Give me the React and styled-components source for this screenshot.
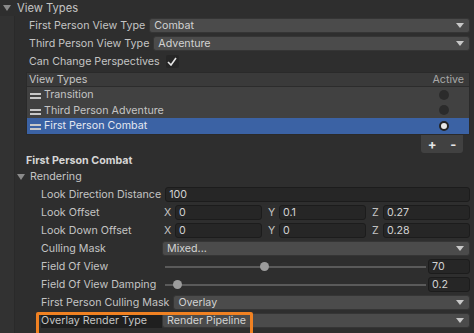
import React from "react";
import styled, { createGlobalStyle } from "styled-components";

const GlobalStyle = createGlobalStyle`
    html, body {
        margin: 0;
        padding: 0;
        background: #2e2e2e;
    }
    * {
        box-sizing: border-box;
    }
`;

const viewTypes = [
    { label: "Transition", active: false },
    { label: "Third Person Adventure", active: false },
    { label: "First Person Combat", active: true, selected: true },
];

const Arrow = () => (
    <svg width="8" height="5" viewBox="0 0 8 5">
        <path d="M0 0 L8 0 L4 5 Z" fill="#c8c8c8" />
    </svg>
);

const Fold = () => (
    <svg width="8" height="6" viewBox="0 0 8 6">
        <path d="M0 0 L8 0 L4 6 Z" fill="#8a8a8a" />
    </svg>
);

const Dropdown = ({ value }) => (
    <Select>
        <span>{value}</span>
        <Arrow />
    </Select>
);

const SliderRow = ({ label, pos, value }) => (
    <Row $indent={26}>
        <Label $min={121}>{label}</Label>
        <Track>
            <Line />
            <Thumb style={{ left: pos }} />
        </Track>
        <NumField>{value}</NumField>
    </Row>
);

const Vector = ({ label, x, y, z }) => (
    <Row $indent={26}>
        <Label $min={121}>{label}</Label>
        <Axes>
            {[["X", x], ["Y", y], ["Z", z]].map(([a, v]) => (
                <Axis key={a}>
                    <AxisName>{a}</AxisName>
                    <Field>{v}</Field>
                </Axis>
            ))}
        </Axes>
    </Row>
);

const App = () => {
    return (
        <Page>
            <GlobalStyle />
            <Foldout>
                <Fold />
                <span>View Types</span>
            </Foldout>
            <Body>
                <Rail />
                <Content>
                    <Row $indent={14}>
                        <Label>First Person View Type</Label>
                        <Dropdown value="Combat" />
                    </Row>
                    <Row $indent={14}>
                        <Label>Third Person View Type</Label>
                        <Dropdown value="Adventure" />
                    </Row>
                    <Row $indent={14}>
                        <Label>Can Change Perspectives</Label>
                        <Check>
                            <svg width="10" height="9" viewBox="0 0 10 9">
                                <path d="M1 5 L4 8 L9 1" stroke="#e6e6e6" strokeWidth="1.6" fill="none" />
                            </svg>
                        </Check>
                    </Row>

                    <List>
                        <ListHeader>
                            <span>View Types</span>
                            <HeaderActive>Active</HeaderActive>
                        </ListHeader>
                        {viewTypes.map((item) => (
                            <ListItem key={item.label} $selected={item.selected}>
                                <Handle />
                                <span>{item.label}</span>
                                <Radio $on={item.active} />
                            </ListItem>
                        ))}
                    </List>
                    <FooterWrap>
                        <Footer>
                            <span>+</span>
                            <span>-</span>
                        </Footer>
                    </FooterWrap>

                    <Title>First Person Combat</Title>
                    <SubFoldout>
                        <Fold />
                        <span>Rendering</span>
                    </SubFoldout>

                    <Row $indent={26}>
                        <Label $min={121}>Look Direction Distance</Label>
                        <Field>100</Field>
                    </Row>
                    <Vector label="Look Offset" x="0" y="0.1" z="0.27" />
                    <Vector label="Look Down Offset" x="0" y="0" z="0.28" />
                    <Row $indent={26}>
                        <Label $min={121}>Culling Mask</Label>
                        <Dropdown value="Mixed..." />
                    </Row>
                    <SliderRow label="Field Of View" pos={95} value="70" />
                    <SliderRow label="Field Of View Damping" pos={8} value="0.2" />
                    <Row $indent={26}>
                        <Label $min={121}>First Person Culling Mask</Label>
                        <Dropdown value="Overlay" />
                    </Row>
                    <Row $indent={26}>
                        <Label $min={121} $dark>Overlay Render Type</Label>
                        <Dropdown value="Render Pipeline" />
                        <Highlight />
                    </Row>
                </Content>
            </Body>
        </Page>
    );
};

export default App;

const Page = styled.div`
    width: 474px;
    height: 333px;
    overflow: hidden;
    background: #2e2e2e;
    color: #c4c4c4;
    font-family: Inter, "Noto Sans", sans-serif;
    font-size: 10.7px;
    display: flex;
    flex-direction: column;
`;

const Foldout = styled.div`
    height: 16px;
    display: flex;
    align-items: center;
    gap: 6px;
    padding-left: 3px;
    flex: none;
    font-size: 11.2px;
`;

const Body = styled.div`
    display: flex;
    flex: 1;
`;

const Rail = styled.div`
    width: 15px;
    flex: none;
    background: #323232;
    border-right: 1px solid #2a2a2a;
`;

const Content = styled.div`
    flex: 1;
    display: flex;
    flex-direction: column;
    padding-right: 4px;
`;

const Row = styled.div`
    position: relative;
    height: 18px;
    flex: none;
    display: flex;
    align-items: center;
    padding-left: ${(p) => p.$indent}px;
`;

const Label = styled.div`
    flex: none;
    min-width: ${(p) => p.$min || 0}px;
    padding-right: 4px;
    height: 15px;
    line-height: 15px;
    white-space: nowrap;
    background: ${(p) => (p.$dark ? "#1f1f1f" : "transparent")};
`;

const Select = styled.div`
    flex: 1;
    height: 15px;
    display: flex;
    align-items: center;
    justify-content: space-between;
    padding: 0 5px 0 4px;
    background: #4b4b4b;
    border: 1px solid #353535;
    border-radius: 3px;
    color: #d2d2d2;
`;

const Check = styled.div`
    width: 13px;
    height: 13px;
    margin-left: 2px;
    border-radius: 2px;
    background: #262626;
    display: flex;
    align-items: center;
    justify-content: center;
`;

const List = styled.div`
    margin: 2px 0 0 11px;
    display: flex;
    flex-direction: column;
    background: #414141;
    border: 1px solid #2a2a2a;
`;

const ListHeader = styled.div`
    height: 14px;
    display: flex;
    align-items: center;
    justify-content: space-between;
    padding: 0 5px 0 2px;
    background: #3a3a3a;
    border-bottom: 1px solid #2c2c2c;
`;

const HeaderActive = styled.span`
    color: #a8a8a8;
`;

const ListItem = styled.div`
    height: 15.5px;
    display: flex;
    align-items: center;
    gap: 3px;
    padding: 0 20px 0 3px;
    background: ${(p) => (p.$selected ? "#3b62a4" : "transparent")};
    color: ${(p) => (p.$selected ? "#e4e8f0" : "#c4c4c4")};

    & > span {
        flex: 1;
    }
`;

const Handle = styled.div`
    width: 11px;
    height: 6px;
    border-top: 2px solid #c8c8c8;
    border-bottom: 2px solid #c8c8c8;
    margin-top: 3px;
`;

const Radio = styled.div`
    width: 10px;
    height: 10px;
    border-radius: 50%;
    background: ${(p) => (p.$on ? "#e8e8e8" : "#2b2b2b")};
    border: ${(p) => (p.$on ? "2px solid #222" : "none")};
`;

const FooterWrap = styled.div`
    display: flex;
    justify-content: flex-end;
    padding-right: 7px;
`;

const Footer = styled.div`
    width: 42px;
    height: 18px;
    display: flex;
    align-items: center;
    justify-content: space-around;
    background: #414141;
    border-radius: 0 0 3px 3px;
    color: #e6e6e6;
    font-weight: 700;
    font-size: 13px;
`;

const Title = styled.div`
    height: 16px;
    display: flex;
    align-items: center;
    padding-left: 11px;
    font-weight: 700;
    color: #d6d6d6;
`;

const SubFoldout = styled.div`
    height: 16px;
    display: flex;
    align-items: center;
    gap: 5px;
    padding-left: 2px;
    margin-bottom: 1px;
`;

const Field = styled.div`
    flex: 1;
    height: 15px;
    line-height: 13px;
    padding-left: 3px;
    background: #262626;
    border: 1px solid #1c1c1c;
    border-radius: 3px;
    color: #d2d2d2;
`;

const Axes = styled.div`
    flex: 1;
    display: flex;
    gap: 6px;
    padding-left: 2px;
`;

const Axis = styled.div`
    flex: 1;
    display: flex;
    align-items: center;
`;

const AxisName = styled.span`
    width: 11px;
    flex: none;
`;

const Track = styled.div`
    position: relative;
    flex: 1;
    height: 15px;
    margin-left: 3px;
    margin-right: 2px;
`;

const Line = styled.div`
    position: absolute;
    left: 0;
    right: 0;
    top: 7px;
    height: 2px;
    background: #5a5a5a;
`;

const Thumb = styled.div`
    position: absolute;
    top: 3px;
    width: 9px;
    height: 9px;
    border-radius: 50%;
    background: #9c9c9c;
`;

const NumField = styled(Field)`
    flex: none;
    width: 42px;
`;

const Highlight = styled.div`
    position: absolute;
    left: 21px;
    top: 0;
    width: 217px;
    height: 26px;
    border: 3px solid #f08122;
    border-radius: 2px;
    pointer-events: none;
`;
